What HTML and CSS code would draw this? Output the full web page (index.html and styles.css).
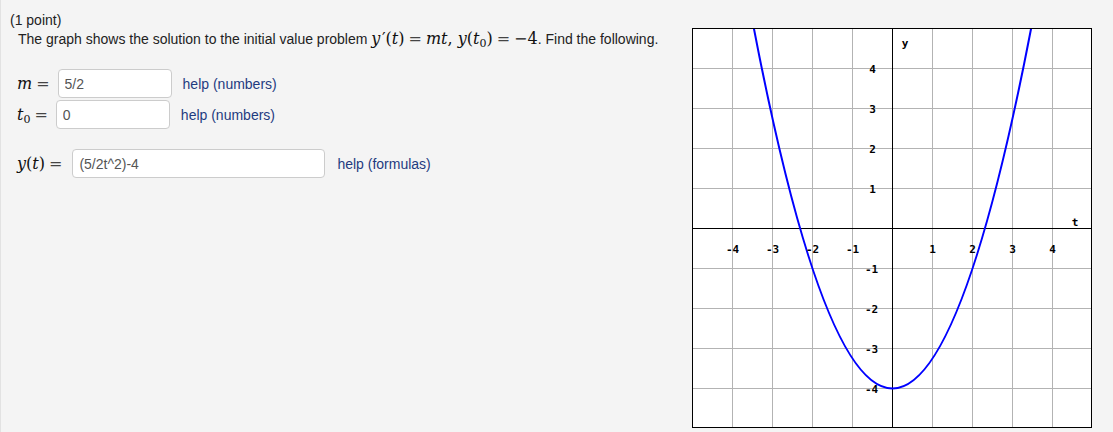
FILE: index.html
```html
<!DOCTYPE html>
<html>
<head>
<meta charset="utf-8">
<link rel="stylesheet" href="styles.css">
</head>
<body>
<div class="page">
  <div class="problem">
    <div class="points">(1 point)</div>
    <p class="statement">The graph shows the solution to the initial value problem <span class="math"><i>y</i>&#8202;′(<i>t</i>)<span class="eq">=</span><i>mt</i>, <i>y</i>(<i>t</i><sub>0</sub>)<span class="eq">=</span>−4</span>. Find the following.</p>
    <div class="answers">
      <div class="row">
        <span class="math label"><i>m</i><span class="eq">=</span></span>
        <input class="ans short" type="text" value="5/2">
        <a class="help">help (numbers)</a>
      </div>
      <div class="row row-t0">
        <span class="math label"><i>t</i><sub>0</sub><span class="eq">=</span></span>
        <input class="ans short" type="text" value="0">
        <a class="help">help (numbers)</a>
      </div>
      <div class="row row-y">
        <span class="math label"><i>y</i>(<i>t</i>)<span class="eq">=</span></span>
        <input class="ans long" type="text" value="(5/2t^2)-4">
        <a class="help">help (formulas)</a>
      </div>
    </div>
  </div>
  <svg class="graph" width="400" height="400" viewBox="0 0 400 400">
    <rect x="0" y="0" width="400" height="400" fill="#fff"/>
    <g stroke="#b3b3b3" stroke-width="1">
      <line x1="40.5" y1="0" x2="40.5" y2="400"/>
      <line x1="80.5" y1="0" x2="80.5" y2="400"/>
      <line x1="120.5" y1="0" x2="120.5" y2="400"/>
      <line x1="160.5" y1="0" x2="160.5" y2="400"/>
      <line x1="240.5" y1="0" x2="240.5" y2="400"/>
      <line x1="280.5" y1="0" x2="280.5" y2="400"/>
      <line x1="320.5" y1="0" x2="320.5" y2="400"/>
      <line x1="360.5" y1="0" x2="360.5" y2="400"/>
      <line x1="0" y1="40.5" x2="400" y2="40.5"/>
      <line x1="0" y1="80.5" x2="400" y2="80.5"/>
      <line x1="0" y1="120.5" x2="400" y2="120.5"/>
      <line x1="0" y1="160.5" x2="400" y2="160.5"/>
      <line x1="0" y1="240.5" x2="400" y2="240.5"/>
      <line x1="0" y1="280.5" x2="400" y2="280.5"/>
      <line x1="0" y1="320.5" x2="400" y2="320.5"/>
      <line x1="0" y1="360.5" x2="400" y2="360.5"/>
    </g>
    <g stroke="#000" stroke-width="1">
      <line x1="200.5" y1="0" x2="200.5" y2="400"/>
      <line x1="0" y1="200.5" x2="400" y2="200.5"/>
    </g>
    <path d="M61.9 0.5 Q200.5 720.5 339.1 0.5" fill="none" stroke="#0000ff" stroke-width="2"/>
    <g class="lbl" text-anchor="middle">
      <text x="40.5" y="225">-4</text>
      <text x="80.5" y="225">-3</text>
      <text x="120.5" y="225">-2</text>
      <text x="160.5" y="225">-1</text>
      <text x="240.5" y="225">1</text>
      <text x="280.5" y="225">2</text>
      <text x="320.5" y="225">3</text>
      <text x="360.5" y="225">4</text>
      <text x="180.5" y="45">4</text>
      <text x="180.5" y="85">3</text>
      <text x="180.5" y="125">2</text>
      <text x="180.5" y="165">1</text>
      <text x="179.5" y="245">-1</text>
      <text x="179.5" y="285">-2</text>
      <text x="179.5" y="325">-3</text>
      <text x="179.5" y="365">-4</text>
      <text x="213" y="19">y</text>
      <text x="383" y="198">t</text>
    </g>
    <rect x="0.5" y="0.5" width="399" height="399" fill="none" stroke="#000" stroke-width="1"/>
  </svg>
</div>
</body>
</html>
```
FILE: styles.css
```css
html, body {
  margin: 0;
  padding: 0;
}
body {
  background: #f4f4f4;
  font-family: "Liberation Sans", Arial, sans-serif;
  font-size: 14px;
  color: #222;
  width: 1113px;
  height: 432px;
  overflow: hidden;
}
.page {
  display: flex;
  justify-content: space-between;
  align-items: flex-start;
  border-left: 1px solid #e2e2e2;
  height: 432px;
  box-sizing: border-box;
}
.problem {
  padding-left: 9px;
}
.points {
  margin-top: 11px;
  line-height: 18px;
}
.statement {
  margin: 0 0 0 8px;
  line-height: 20px;
  height: 20px;
  white-space: nowrap;
}
.math {
  font-family: "DejaVu Serif", "Liberation Serif", serif;
  font-size: 16px;
  color: #111;
}
.math i {
  font-style: italic;
}
.math .eq {
  margin: 0 4px;
  color: #444;
}
.math sub {
  font-size: 11px;
  vertical-align: -3px;
  line-height: 0;
}
.answers {
  margin-top: 20px;
  padding-left: 7px;
}
.row {
  display: flex;
  align-items: center;
  height: 29px;
}
.row-t0 {
  margin-top: 2px;
}
.row-y {
  margin-top: 20px;
}
.label {
  white-space: nowrap;
  line-height: 20px;
}
.label .eq {
  margin-right: 0;
}
.ans {
  box-sizing: border-box;
  height: 29px;
  margin: 0 0 0 8px;
  padding: 0 6px;
  border: 1px solid #cccccc;
  border-radius: 4px;
  background: #fff;
  font-family: "Liberation Sans", Arial, sans-serif;
  font-size: 14px;
  color: #555;
}
.row-y .ans {
  margin-left: 10px;
}
.short {
  width: 114px;
}
.long {
  width: 253px;
}
.help {
  margin-left: 11px;
  color: #1f3b80;
  text-decoration: none;
  white-space: nowrap;
}
.row-y .help {
  margin-left: 12px;
}
.graph {
  display: block;
  margin-top: 28px;
  margin-right: 21px;
  flex: none;
}
.lbl text {
  font-family: "DejaVu Sans Mono", monospace;
  font-weight: bold;
  font-size: 11px;
  fill: #000;
}
```
